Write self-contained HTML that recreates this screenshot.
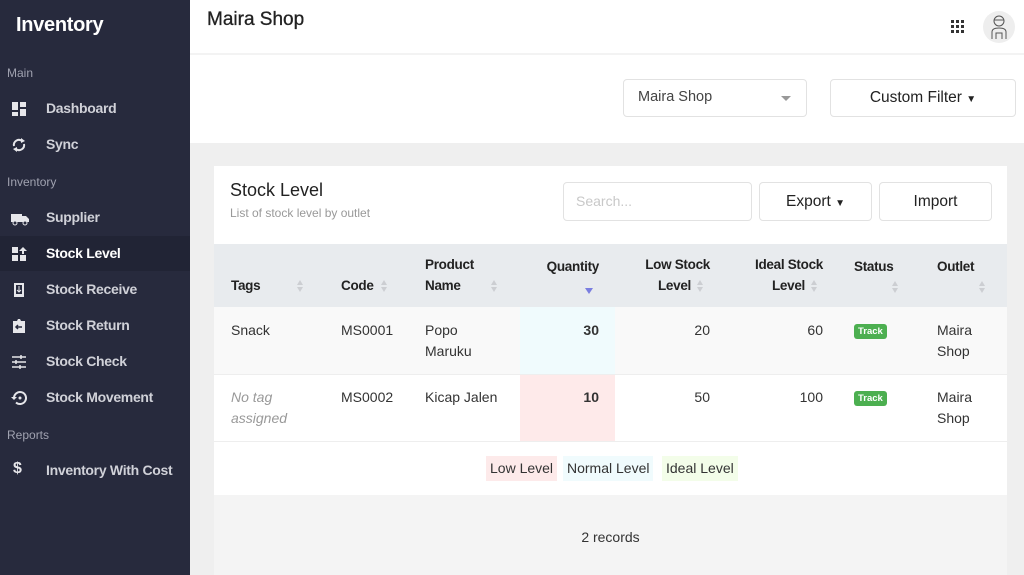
<!DOCTYPE html><html><head><style>
*{box-sizing:border-box;margin:0;padding:0}
body{width:1024px;height:575px;overflow:hidden;font-family:"Liberation Sans",sans-serif;background:#efefef;position:relative;color:#333}
.a{position:absolute}
.sb{left:0;top:0;width:190px;height:575px;background:#272a3d}
.sec{left:7px;font-size:12px;color:#a0a2b0}
.it{left:46px;font-size:14px;color:#d0d1d8;font-weight:bold;letter-spacing:-0.3px}
.ic{left:11px;width:16px;height:16px}
.btn{background:#fff;border:1px solid #e2e2e2;border-radius:4px;font-size:15.5px;color:#222;text-align:center}
.th{font-size:13.5px;font-weight:bold;color:#222;line-height:21px;letter-spacing:-0.3px}
.td{font-size:14px;color:#333;line-height:21px}
.sort{width:6px;height:14px}
.badge{background:#4caf50;color:#fff;font-size:9.5px;font-weight:bold;padding:2px 4px;border-radius:3px}
</style></head><body>
<div class="a sb"></div>
<div class="a" style="left:16px;top:14px;font-size:20px;color:#fff;font-weight:bold;letter-spacing:-0.3px">Inventory</div>
<div class="a sec" style="top:66px">Main</div>
<div class="a" style="left:0;top:236px;width:190px;height:35px;background:#212435"></div>
<svg class="a ic" style="top:101px" viewBox="0 0 16 16"><path fill="#e6e6ea" d="M1 1h6v8H1zM9 1h6v5H9zM9 8h6v7H9zM1 11h6v4H1z"/></svg>
<div class="a it" style="top:100px">Dashboard</div>
<svg class="a ic" style="top:137px" viewBox="0 0 16 16"><path fill="none" stroke="#e6e6ea" stroke-width="2" d="M3 9a5 5 0 0 1 8-5M13 7a5 5 0 0 1-8 5"/><path fill="#e6e6ea" d="M10 1l4 3-4 2zM6 15l-4-3 4-2z"/></svg>
<div class="a it" style="top:136px">Sync</div>
<div class="a sec" style="top:175px">Inventory</div>
<svg class="a ic" style="top:210px;width:18px" viewBox="0 0 18 16"><path fill="#e6e6ea" d="M0 4h11v8H0zM11 6h4l3 3v3h-7z"/><circle cx="4" cy="13" r="2" fill="#272a3d" stroke="#e6e6ea"/><circle cx="14" cy="13" r="2" fill="#272a3d" stroke="#e6e6ea"/></svg>
<div class="a it" style="top:209px">Supplier</div>
<svg class="a ic" style="top:246px" viewBox="0 0 16 16"><path fill="#e6e6ea" d="M1 1h6v6H1zM1 9h6v6H1zM9 9h6v6H9zM12 1l4 4h-3v3h-2V5H8z"/></svg>
<div class="a it" style="top:245px;color:#fff">Stock Level</div>
<svg class="a ic" style="top:282px" viewBox="0 0 16 16"><rect x="3" y="1" width="10" height="14" fill="#e6e6ea"/><rect x="5" y="3" width="6" height="9" fill="#272a3d"/><path d="M8 4v6M6 8l2 2 2-2" stroke="#e6e6ea" fill="none"/></svg>
<div class="a it" style="top:281px">Stock Receive</div>
<svg class="a ic" style="top:318px" viewBox="0 0 16 16"><path fill="#e6e6ea" d="M2 3h4l1-2h2l1 2h4v12H2z"/><path d="M11 9H5M7 7L5 9l2 2" stroke="#272a3d" stroke-width="1.5" fill="none"/></svg>
<div class="a it" style="top:317px">Stock Return</div>
<svg class="a ic" style="top:354px" viewBox="0 0 16 16"><path stroke="#e6e6ea" stroke-width="1.5" d="M1 3h14M1 8h14M1 13h14M10 1v4M5 6v4M9 11v4"/></svg>
<div class="a it" style="top:353px">Stock Check</div>
<svg class="a ic" style="top:390px" viewBox="0 0 16 16"><path fill="none" stroke="#e6e6ea" stroke-width="2" d="M3 8a6 6 0 1 1 2 4.5"/><path fill="#e6e6ea" d="M0 7h6l-3 3z"/><circle cx="9" cy="8" r="1.5" fill="#e6e6ea"/></svg>
<div class="a it" style="top:389px">Stock Movement</div>
<div class="a sec" style="top:428px">Reports</div>
<div class="a" style="left:13px;top:460px;font-size:16px;color:#e6e6ea;font-weight:bold">$</div>
<div class="a it" style="top:462px">Inventory With Cost</div>

<div class="a" style="left:190px;top:0;width:834px;height:143px;background:#fff"></div>
<div class="a" style="left:190px;top:53px;width:834px;height:2px;background:#f3f3f3"></div>
<div class="a" style="left:207px;top:9px;font-size:19px;color:#222;-webkit-text-stroke:0.3px #222">Maira Shop</div>
<svg class="a" style="left:951px;top:20px" width="13" height="13" viewBox="0 0 13 13"><g fill="#333"><rect x="0" y="0" width="3" height="3"/><rect x="5" y="0" width="3" height="3"/><rect x="10" y="0" width="3" height="3"/><rect x="0" y="5" width="3" height="3"/><rect x="5" y="5" width="3" height="3"/><rect x="10" y="5" width="3" height="3"/><rect x="0" y="10" width="3" height="3"/><rect x="5" y="10" width="3" height="3"/><rect x="10" y="10" width="3" height="3"/></g></svg>
<div class="a" style="left:983px;top:11px;width:32px;height:32px;border-radius:50%;background:#eee"></div>
<svg class="a" style="left:989px;top:14px" width="20" height="26" viewBox="0 0 20 26"><circle cx="10" cy="7" r="5" fill="none" stroke="#555"/><path d="M5 6h10" stroke="#555"/><path d="M3 25v-7q0-4 7-4t7 4v7M7 25v-6h6v6" fill="none" stroke="#555"/></svg>

<div class="a btn" style="left:623px;top:79px;width:184px;height:38px;text-align:left;padding:9px 14px;font-size:14.5px;color:#444">Maira Shop</div>
<div class="a" style="left:781px;top:96px;border:5px solid transparent;border-top:5px solid #999;border-bottom:0"></div>
<div class="a btn" style="left:830px;top:79px;width:186px;height:38px;padding-top:9px">Custom Filter <span style="font-size:10px">▼</span></div>

<div class="a" style="left:214px;top:166px;width:793px;height:409px;background:#fff"></div>
<div class="a" style="left:230px;top:180px;font-size:18px;color:#222">Stock Level</div>
<div class="a" style="left:230px;top:206px;font-size:12px;color:#999">List of stock level by outlet</div>
<div class="a btn" style="left:563px;top:182px;width:189px;height:39px;text-align:left;padding:10px 12px;font-size:14px;color:#c8c8c8">Search...</div>
<div class="a btn" style="left:759px;top:182px;width:113px;height:39px;padding-top:10px">Export <span style="font-size:10px">▼</span></div>
<div class="a btn" style="left:879px;top:182px;width:113px;height:39px;padding-top:10px">Import</div>

<div class="a" style="left:214px;top:244px;width:793px;height:63px;background:#e8ebee"></div>
<div class="a" style="left:214px;top:307px;width:793px;height:67px;background:#f9f9f9"></div>
<div class="a" style="left:214px;top:374px;width:793px;height:1px;background:#eee"></div>
<div class="a" style="left:214px;top:441px;width:793px;height:1px;background:#eee"></div>
<div class="a" style="left:520px;top:307px;width:95px;height:67px;background:#f0fbfd"></div>
<div class="a" style="left:520px;top:375px;width:95px;height:66px;background:#feeaea"></div>

<div class="a th" style="left:231px;top:275px">Tags</div>
<div class="a th" style="left:341px;top:275px">Code</div>
<div class="a th" style="left:425px;top:254px">Product<br>Name</div>
<div class="a th" style="left:520px;top:256px;width:79px;text-align:right">Quantity</div>
<div class="a th" style="left:620px;top:254px;width:90px;text-align:right">Low Stock</div>
<div class="a th" style="left:620px;top:275px;width:71px;text-align:right">Level</div>
<div class="a th" style="left:730px;top:254px;width:93px;text-align:right">Ideal Stock</div>
<div class="a th" style="left:730px;top:275px;width:75px;text-align:right">Level</div>
<div class="a th" style="left:854px;top:256px">Status</div>
<div class="a th" style="left:937px;top:256px">Outlet</div>
<div class="a" style="left:585px;top:288px;border:4px solid transparent;border-top:6px solid #7a7ee0;border-bottom:0"></div>
<svg width="0" height="0"><defs><g id="s"><path d="M0 6l3-5 3 5zM0 8l3 5 3-5z" fill="#ccced2"/></g></defs></svg>
<svg class="a sort" style="left:297px;top:279px"><use href="#s"/></svg>
<svg class="a sort" style="left:381px;top:279px"><use href="#s"/></svg>
<svg class="a sort" style="left:491px;top:279px"><use href="#s"/></svg>
<svg class="a sort" style="left:697px;top:279px"><use href="#s"/></svg>
<svg class="a sort" style="left:811px;top:279px"><use href="#s"/></svg>
<svg class="a sort" style="left:892px;top:280px"><use href="#s"/></svg>
<svg class="a sort" style="left:979px;top:280px"><use href="#s"/></svg>

<div class="a td" style="left:231px;top:320px">Snack</div>
<div class="a td" style="left:341px;top:320px">MS0001</div>
<div class="a td" style="left:425px;top:320px">Popo<br>Maruku</div>
<div class="a td" style="left:540px;top:320px;width:59px;text-align:right;font-weight:bold">30</div>
<div class="a td" style="left:640px;top:320px;width:70px;text-align:right">20</div>
<div class="a td" style="left:750px;top:320px;width:73px;text-align:right">60</div>
<div class="a badge" style="left:854px;top:324px">Track</div>
<div class="a td" style="left:937px;top:320px">Maira<br>Shop</div>

<div class="a td" style="left:231px;top:387px;color:#999;font-style:italic">No tag<br>assigned</div>
<div class="a td" style="left:341px;top:387px">MS0002</div>
<div class="a td" style="left:425px;top:387px">Kicap Jalen</div>
<div class="a td" style="left:540px;top:387px;width:59px;text-align:right;font-weight:bold">10</div>
<div class="a td" style="left:640px;top:387px;width:70px;text-align:right">50</div>
<div class="a td" style="left:750px;top:387px;width:73px;text-align:right">100</div>
<div class="a badge" style="left:854px;top:391px">Track</div>
<div class="a td" style="left:937px;top:387px">Maira<br>Shop</div>

<div class="a td" style="left:486px;top:456px;height:25px;padding:2px 4px;background:#fdeaea;font-size:14px">Low Level</div>
<div class="a td" style="left:563px;top:456px;height:25px;padding:2px 4px;background:#f0fbfd;font-size:14px">Normal Level</div>
<div class="a td" style="left:662px;top:456px;height:25px;padding:2px 4px;background:#f3fde9;font-size:14px">Ideal Level</div>

<div class="a" style="left:214px;top:495px;width:793px;height:80px;background:#f4f4f4"></div>
<div class="a td" style="left:214px;top:527px;width:793px;text-align:center">2 records</div>
</body></html>
